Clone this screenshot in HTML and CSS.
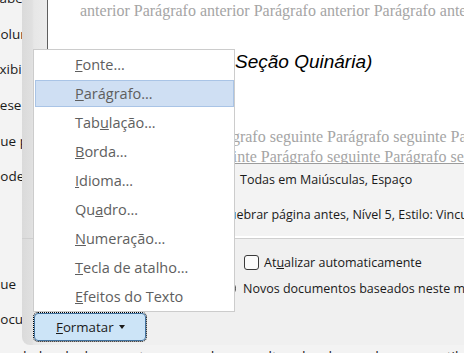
FILE: index.html
```html
<!DOCTYPE html>
<html>
<head>
<meta charset="utf-8">
<title>Modificar Estilo - Formatar</title>
<link rel="stylesheet" href="styles.css">
</head>
<body>

<div class="doc">
  <div class="doc-line">Tabelas</div>
  <div class="doc-line">Colunas</div>
  <div class="doc-line">Exibir</div>
  <div class="doc-line wide">Desenhar</div>
  <div class="doc-line">que permite</div>
  <div class="doc-line">pode</div>
  <div class="doc-line"></div>
  <div class="doc-line"></div>
  <div class="doc-line">que</div>
  <div class="doc-line">documento</div>
  <div class="doc-last">dos dados de documentos que podem ser alterados de acordo com o estilo</div>
</div>

<div class="dialog">
  <div class="preview">
    <div class="pv-line">Parágrafo anterior Parágrafo anterior Parágrafo anterior Parágrafo anterior Parágrafo</div>
    <div class="pv-line">anterior Parágrafo anterior Parágrafo anterior Parágrafo anterior</div>
    <div class="pv-head">Seção Quinária)</div>
    <div class="pv-line next1">Parágrafo seguinte Parágrafo seguinte Parágrafo seguinte Parágrafo seguinte</div>
    <div class="pv-line">seguinte Parágrafo seguinte Parágrafo seguinte Parágrafo seguinte</div>
  </div>

  <div class="desc">
    <div class="desc-line l1">Todas em Maiúsculas, Espaço</div>
    <div class="desc-line l2">Quebrar página antes, Nível 5, Estilo: Vinculado, Mostrar na galeria</div>
  </div>

  <div class="options">
    <div class="opt-row checks">
      <label class="opt"><span class="box"></span>At<u>u</u>alizar automaticamente</label>
    </div>
    <div class="opt-row radios">
      <label class="opt"><span class="dot"></span>Novos documentos baseados neste modelo</label>
    </div>
  </div>

  <div class="footer">
    <button class="fmt"><span><u>F</u>ormatar</span><span class="caret"></span></button>
  </div>
</div>

<ul class="menu">
  <li><u>F</u>onte…</li>
  <li class="hl"><u>P</u>arágrafo…</li>
  <li>Tab<u>u</u>lação…</li>
  <li><u>B</u>orda…</li>
  <li><u>I</u>dioma…</li>
  <li>Qu<u>a</u>dro…</li>
  <li><u>N</u>umeração…</li>
  <li><u>T</u>ecla de atalho…</li>
  <li><u>E</u>feitos do Texto</li>
</ul>

</body>
</html>
```

FILE: styles.css
```css
body{
	margin:0;
	width:464px;
	height:353px;
	overflow:hidden;
	position:relative;
	background:#f3f3f3;
	font-family:"Open Sans","Noto Sans",sans-serif;
	color:#1a1a1a;
}
.doc{
	margin-top:-19px;
	font-size:13.5px;
	line-height:35.7px;
	white-space:nowrap;
}
.doc-line{
	width:22px;
	height:35.7px;
	overflow:hidden;
	text-indent:-8px;
}
.doc-line.wide{
	text-indent:-10px;
}
.doc-last{
	margin-top:1px;
	text-indent:-8px;
}

/* janela Modificar Estilo */
.dialog{
	position:absolute;
	left:22px;
	top:-20px;
	right:-40px;
	height:365px;
	border-bottom-left-radius:8px;
	background:linear-gradient(to right,#dadada 0,#e0e0e0 10px,#e7e7e7 12px,#ececec 25px,#f0f0f0 45px);
	display:flex;
	flex-direction:column;
	font-size:12.5px;
}
.preview{
	margin-left:25px;
	height:184px;
	box-sizing:border-box;
	border:1px solid #8f8f8f;
	border-left-color:#5f5f5f;
	border-bottom-color:#9c9c9c;
	background:#fff;
	overflow:hidden;
	padding-left:32px;
	font-family:"Liberation Serif",serif;
	font-size:16px;
	line-height:20px;
	color:#a5a5a5;
	white-space:nowrap;
}
.pv-head{
	margin-top:29px;
	padding-left:155px;
	font-family:"Liberation Sans",Arial,sans-serif;
	font-style:italic;
	font-size:19px;
	line-height:24px;
	color:#000;
}
.next1{
	margin-top:53px;
}
.desc{
	margin-left:25px;
	height:74px;
	box-sizing:border-box;
	padding-top:6px;
	background:#f3f3f3;
	border-bottom:2px solid #fff;
	line-height:20px;
	white-space:nowrap;
	overflow:hidden;
}
.desc-line.l1{
	padding-left:193px;
}
.desc-line.l2{
	margin-top:15px;
	padding-left:172px;
}
.options{
	border-top:1px solid #cfcfcf;
	padding-top:10px;
	white-space:nowrap;
}
.opt-row{
	display:flex;
	height:26px;
	align-items:center;
}
.checks{
	padding-left:222px;
}
.radios{
	padding-left:199px;
}
.opt{
	display:flex;
	align-items:center;
}
.box{
	width:15px;
	height:15px;
	box-sizing:border-box;
	border:1px solid #3a3a3a;
	border-radius:3px;
	background:#fbfbfb;
	margin-right:5px;
}
.dot{
	width:15px;
	height:15px;
	box-sizing:border-box;
	border:1px solid #3a3a3a;
	border-radius:50%;
	background:#fbfbfb;
	margin-right:7px;
}
.footer{
	margin-top:auto;
	padding:0 0 4px 12px;
}
.fmt{
	display:flex;
	align-items:center;
	width:112px;
	height:28px;
	box-sizing:border-box;
	border:1px solid #41729f;
	border-radius:4px;
	background:#cce4f7;
	outline:1px dotted #000;
	padding:0 0 0 21px;
	font-family:inherit;
	font-size:13.3px;
	color:#1a1a1a;
}
.caret{
	margin-left:5px;
	border-left:3.5px solid transparent;
	border-right:3.5px solid transparent;
	border-top:4px solid #1a1a1a;
}

/* menu Formatar */
.menu{
	position:absolute;
	left:33px;
	top:49px;
	width:202px;
	box-sizing:border-box;
	display:flex;
	flex-direction:column;
	margin:0;
	padding:0;
	list-style:none;
	border:1px solid #cccccc;
	background:#fff;
	font-size:14.5px;
	color:#5e5e5e;
}
.menu li{
	height:27px;
	box-sizing:border-box;
	margin:1px 0 1px 1px;
	border:1px solid transparent;
	padding-left:39px;
	line-height:25px;
	white-space:nowrap;
}
.menu li.hl{
	background:#cfdff3;
	border-color:#a9c4e6;
}
```
